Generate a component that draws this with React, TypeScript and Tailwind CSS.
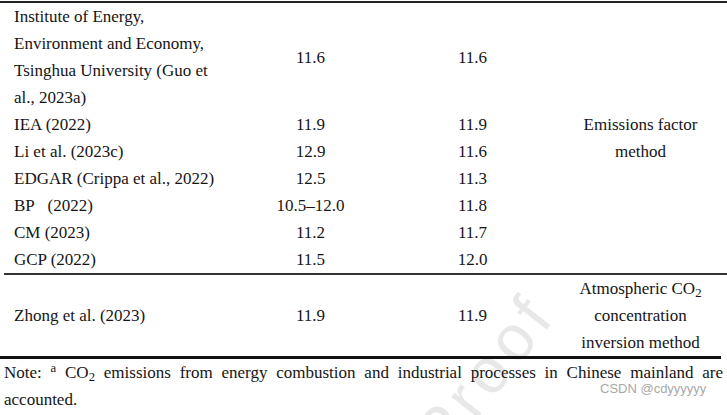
export default function App() {
  const rows: [React.ReactNode, string, string][] = [
    [
      <>
        Institute of Energy,
        <br />
        Environment and Economy,
        <br />
        Tsinghua University (Guo et
        <br />
        al., 2023a)
      </>,
      '11.6',
      '11.6',
    ],
    ['IEA (2022)', '11.9', '11.9'],
    ['Li et al. (2023c)', '12.9', '11.6'],
    ['EDGAR (Crippa et al., 2022)', '12.5', '11.3'],
    ['BP\u00a0\u00a0 (2022)', '10.5–12.0', '11.8'],
    ['CM (2023)', '11.2', '11.7'],
    ['GCP (2022)', '11.5', '12.0'],
  ];

  return (
    <div className="relative w-[727px] h-[415px] overflow-hidden bg-white text-[17px] leading-[27px] text-[#151515] font-['Liberation_Serif']">
      {/* watermark */}
      <div className="pointer-events-none absolute left-[428px] top-[414px] origin-left -rotate-[52deg] text-[64px] leading-none tracking-[6px] text-[#e8e8e8] font-['Liberation_Sans']">
        Proof
      </div>

      <div className="relative mt-[1px] border-t-2 border-[#222]">
        <div className="grid grid-cols-[250px_121px_203px_133px] items-center">
          {rows.map(([name, a, b], i) => (
            <div key={i} className="contents">
              <div className="pl-[14px]">{name}</div>
              <div className="text-center">{a}</div>
              <div className="text-center">{b}</div>
              {i === 0 && (
                <div className="row-span-7 col-start-4 row-start-1 text-center">
                  Emissions factor
                  <br />
                  method
                </div>
              )}
            </div>
          ))}
        </div>

        <div className="h-[2px] ml-[4px] bg-[#333]" />

        <div className="grid grid-cols-[250px_121px_203px_133px] items-center">
          <div className="pl-[14px]">Zhong et al. (2023)</div>
          <div className="text-center">11.9</div>
          <div className="text-center">11.9</div>
          <div className="text-center whitespace-nowrap">
            Atmospheric CO<sub>2</sub>
            <br />
            concentration
            <br />
            inversion method
          </div>
        </div>

        <div className="h-[3px] mr-[6px] bg-[#111]" />

        <div className="px-[4px] text-justify [text-align-last:left]">
          Note: <sup>a</sup> CO<sub>2</sub> emissions from energy combustion and industrial processes in Chinese mainland are accounted.
        </div>
      </div>

      <div className="absolute left-[600px] top-[382px] text-[13px] leading-none text-[#a8a8a8] font-['Liberation_Sans']">
        CSDN @cdyyyyyy
      </div>
    </div>
  );
}
